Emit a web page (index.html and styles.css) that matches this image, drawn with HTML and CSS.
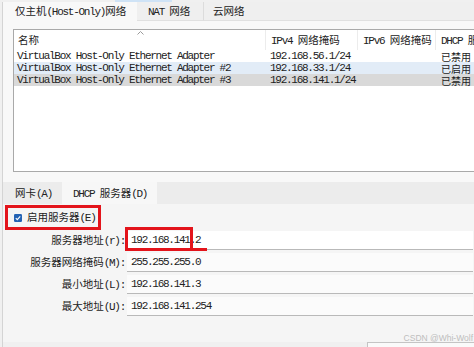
FILE: index.html
```html
<!DOCTYPE html>
<html>
<head>
<meta charset="utf-8">
<link rel="stylesheet" href="styles.css">
</head>
<body>
<div class="top"><div class="hl"></div></div>
<div class="win">
  <div class="tabs1">
    <div class="t t-on"><span><span class="c">仅主机</span>(Host-Only)<span class="c">网络</span></span></div>
    <div class="t t-nat"><span>NAT <span class="c">网络</span></span></div>
    <div class="t t-cloud"><span class="c">云网络</span></div>
  </div>
  <div class="panel1">
    <div class="list">
      <div class="hdr">
        <div class="col n"><span class="c">名称</span><svg class="sort" width="7" height="4" viewBox="0 0 7 4"><polyline points="0.5,3.5 3.5,0.5 6.5,3.5" fill="none" stroke="#9a9a9a" stroke-width="1"/></svg></div>
        <div class="col i4"><span>IPv4 <span class="c">网络掩码</span></span></div>
        <div class="col i6"><span>IPv6 <span class="c">网络掩码</span></span></div>
        <div class="col dh"><span>DHCP <span class="c">服</span></span></div>
      </div>
      <div class="row">
        <div class="col n">VirtualBox Host-Only Ethernet Adapter</div>
        <div class="col i4">192.168.56.1/24</div>
        <div class="col i6"></div>
        <div class="col dh"><span class="c">已禁用</span></div>
      </div>
      <div class="row sel">
        <div class="col n">VirtualBox Host-Only Ethernet Adapter #2</div>
        <div class="col i4">192.168.33.1/24</div>
        <div class="col i6"></div>
        <div class="col dh"><span class="c">已启用</span></div>
      </div>
      <div class="row gray">
        <div class="col n">VirtualBox Host-Only Ethernet Adapter #3</div>
        <div class="col i4">192.168.141.1/24</div>
        <div class="col i6"></div>
        <div class="col dh"><span class="c">已禁用</span></div>
      </div>
    </div>
  </div>
  <div class="tabs2">
    <div class="t2 t2-nic"><span><span class="c">网卡</span>(A)</span></div>
    <div class="t2 t2-on"><span>DHCP <span class="c">服务器</span>(D)</span></div>
  </div>
  <div class="panel2">
    <div class="chk">
      <svg width="8" height="8" viewBox="0 0 8 8"><rect x="0" y="0" width="8" height="8" rx="1.2" fill="#2463b4"/><polyline points="1.8,4.1 3.3,5.6 6.2,2.4" fill="none" stroke="#fff" stroke-width="1.1"/></svg>
      <span><span class="c">启用服务器</span>(E)</span>
    </div>
    <div class="form">
      <div class="lbl"><span><span class="c">服务器地址</span>(r):</span></div>
      <div class="in in1">192.168.141.2<div class="mark"></div><div class="tail"></div></div>
      <div class="lbl"><span><span class="c">服务器网络掩码</span>(M):</span></div>
      <div class="in">255.255.255.0</div>
      <div class="lbl"><span><span class="c">最小地址</span>(L):</span></div>
      <div class="in">192.168.141.3</div>
      <div class="lbl"><span><span class="c">最大地址</span>(U):</span></div>
      <div class="in">192.168.141.254</div>
    </div>
  </div>
  <div class="foot"><div class="fbox"></div></div>
</div>
<div class="wm">CSDN @Whi-Wolf</div>
</body>
</html>
```
FILE: styles.css
```css
* { box-sizing: border-box; margin: 0; padding: 0; }
html, body { width: 474px; height: 347px; overflow: hidden; }
body {
  background: #f0f0f0;
  font-family: "Liberation Mono", "Noto Sans CJK SC", monospace;
  font-size: 11px;
  line-height: 12px;
  letter-spacing: -1.27px;
  color: #222;
  position: relative;
}
.c {
  font-family: "Noto Sans CJK SC", "Liberation Mono", sans-serif;
  font-size: 10.5px;
  line-height: 12px;
  letter-spacing: 0;
}
.top { height: 2px; display: flex; }
.top .hl { margin-left: 115px; width: 57px; background: #cfe3f6; }
.win { margin-left: 2px; border-left: 1px solid #d4d4d4; width: 472px; }

.tabs1 { height: 19px; display: flex; background: #efefef; }
.t { display: flex; align-items: center; height: 19px; white-space: nowrap; }
.t-on { width: 134px; padding-left: 12px; background: #f8f8f8; }
.t-nat { width: 67px; padding-left: 11px; border-right: 1px solid #dcdcdc; border-bottom: 1px solid #e0e0e0; }
.t-cloud { flex: 1; padding-left: 9px; border-bottom: 1px solid #e0e0e0; }

.panel1 { height: 161px; background: #f8f8f8; padding: 8px 0 0 10px; overflow: hidden; }
.list { width: 540px; height: 143px; border: 1px solid #a9a9a9; background: #fff; }
.hdr { display: flex; height: 20px; }
.row { display: flex; height: 12px; }
.col { display: flex; align-items: center; white-space: nowrap; overflow: hidden; }
.hdr .col { border-right: 1px solid #ececec; position: relative; }
.n { width: 252px; padding-left: 3px; }
.hdr .n { padding-left: 4px; }
.i4 { width: 92px; padding-left: 4px; }
.hdr .i4 { padding-left: 5px; }
.i6 { width: 78px; padding-left: 5px; }
.dh { width: 100px; padding-left: 5px; }
.row .dh .c { font-size: 10px; line-height: 11px; }
.sort { position: absolute; left: 123px; top: 1px; }
.row.sel { background: #e2ecf7; }
.row.gray { background: #d9d9d9; }

.tabs2 { height: 22px; display: flex; background: #ececec; }
.t2 { display: flex; align-items: center; white-space: nowrap; }
.t2-nic { width: 59px; padding-left: 12px; }
.t2-on { width: 95px; padding-left: 11px; background: #f7f7f7; }

.panel2 { height: 138px; background: #f5f5f5; padding-top: 1px; }
.chk {
  margin-left: 2px; width: 96px; height: 25px;
  border: 3px solid #e3141b;
  display: flex; align-items: center; gap: 5px; padding-left: 6px;
  white-space: nowrap;
}
.form {
  display: grid;
  grid-template-columns: 122px 346px;
  column-gap: 2px;
  row-gap: 3px;
  margin-top: 1px;
}
.lbl { display: flex; align-items: center; justify-content: flex-end; height: 19px; white-space: nowrap; }
.in {
  height: 19px; background: #fbfbfb; border-bottom: 1px solid #b9b9b9;
  padding-left: 4px; display: flex; align-items: center; white-space: nowrap;
}
.in1 { background: #fff; position: relative; }
.mark { position: absolute; left: -2px; top: -4px; width: 68px; height: 24px; border: 3px solid #e3141b; }
.tail { position: absolute; left: 65px; top: 17px; width: 15px; height: 3px; background: #e3141b; }

.foot { height: 5px; }
.fbox { margin-left: 364px; height: 5px; border-top: 1px solid #c4c4c4; border-left: 1px solid #c4c4c4; background: #fafafa; }
.wm {
  position: absolute; right: 1px; top: 333px;
  font-family: "Liberation Sans", sans-serif; font-size: 8.5px; line-height: 10px; letter-spacing: 0;
  color: #bdbdbd;
}
```
